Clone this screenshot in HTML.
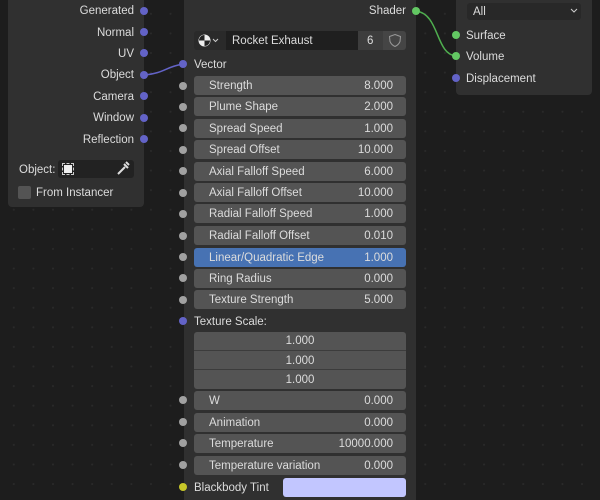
<!DOCTYPE html>
<html><head><style>
*{margin:0;padding:0;box-sizing:border-box}
html,body{width:600px;height:500px;overflow:hidden}
body{position:relative;background-color:#1d1d1d;
background-image:radial-gradient(circle,#2a2a2a 0.8px,transparent 1.2px);background-size:19.6px 19.6px;background-position:4px 4px;
font-family:"Liberation Sans","DejaVu Sans",sans-serif;font-size:11.5px;color:#dcdcdc}
.node{position:absolute;background:#303030;border-radius:4px}
.sock{position:absolute;width:8px;height:8px;border-radius:50%;margin:-4px 0 0 -4px}
.p{background:#6363c7}.g{background:#a1a1a1}.gr{background:#63c763}.y{background:#c7c729}
.t{position:absolute;white-space:nowrap;line-height:13px;margin-top:1px}
.f{position:absolute;left:194px;width:212px;height:19px;background:#545454;border-radius:3px}
.f span{position:absolute;top:4px;line-height:13px}
.f .l{left:15px}.f .v{right:13px}
.hl{background:#4772b3}
</style></head><body>
<svg style="position:absolute;left:0;top:0" width="600" height="500">
<path d="M144 75 C165 73 165 67 183 64" stroke="#6363c7" stroke-width="1.5" fill="none"/>
<path d="M416 11 C440 14 435 54 456 56" stroke="#4fae4f" stroke-width="1.5" fill="none"/>
</svg>
<div class="node" style="left:8px;top:-10px;width:136px;height:217px"></div>
<div class="t" style="right:466px;top:4px">Generated</div>
<div class="t" style="right:466px;top:26px">Normal</div>
<div class="t" style="right:466px;top:47px">UV</div>
<div class="t" style="right:466px;top:68px">Object</div>
<div class="t" style="right:466px;top:90px">Camera</div>
<div class="t" style="right:466px;top:111px">Window</div>
<div class="t" style="right:466px;top:133px">Reflection</div>
<div class="sock p" style="left:144px;top:11px"></div>
<div class="sock p" style="left:144px;top:32px"></div>
<div class="sock p" style="left:144px;top:53px"></div>
<div class="sock p" style="left:144px;top:75px"></div>
<div class="sock p" style="left:144px;top:96px"></div>
<div class="sock p" style="left:144px;top:118px"></div>
<div class="sock p" style="left:144px;top:139px"></div>
<div class="t" style="left:19px;top:163px">Object:</div>
<div style="position:absolute;left:58px;top:160px;width:76px;height:18px;background:#222;border-radius:3px"></div>
<div style="position:absolute;left:62px;top:163px;width:12px;height:12px;border:1px dashed #ccc"></div>
<div style="position:absolute;left:64px;top:165px;width:8px;height:8px;background:#eee"></div>
<svg style="position:absolute;left:116px;top:161px" width="14" height="15"><path d="M2 13 L9 6 M8 3 L12 7 M10 1 L13 4" stroke="#ddd" stroke-width="2" fill="none"/></svg>
<div style="position:absolute;left:18px;top:186px;width:13px;height:13px;background:#545454;border-radius:2px"></div>
<div class="t" style="left:36px;top:186px">From Instancer</div>
<div class="node" style="left:456px;top:-10px;width:136px;height:105px"></div>
<div style="position:absolute;left:467px;top:3px;width:114px;height:17px;background:#282828;border-radius:3px"></div>
<div class="t" style="left:473px;top:5px">All</div>
<svg style="position:absolute;left:570px;top:8px" width="8" height="6"><path d="M1 1 L4 4 L7 1" stroke="#ccc" fill="none"/></svg>
<div class="sock gr" style="left:456px;top:35px"></div>
<div class="sock gr" style="left:456px;top:56px"></div>
<div class="sock p" style="left:456px;top:78px"></div>
<div class="t" style="left:466px;top:29px">Surface</div>
<div class="t" style="left:466px;top:50px">Volume</div>
<div class="t" style="left:466px;top:72px">Displacement</div>
<div class="node" style="left:184px;top:-10px;width:232px;height:510px;border-radius:4px 4px 0 0"></div>
<div class="t" style="right:194px;top:4px">Shader</div>
<div class="sock gr" style="left:416px;top:11px"></div>
<div style="position:absolute;left:194px;top:31px;width:32px;height:19px;background:#2a2a2a;border-radius:3px 0 0 3px"></div>
<svg style="position:absolute;left:198px;top:34px" width="24" height="13"><circle cx="6.5" cy="6.5" r="5.5" fill="#eee" stroke="#eee"/><path d="M6.5 1 A5.5 5.5 0 0 0 1 6.5 L6.5 6.5Z M6.5 6.5 L12 6.5 A5.5 5.5 0 0 1 6.5 12Z" fill="#222"/><path d="M15 5 L17.5 7.5 L20 5" stroke="#ccc" fill="none"/></svg>
<div style="position:absolute;left:226px;top:31px;width:132px;height:19px;background:#1f1f1f"></div>
<div class="t" style="left:232px;top:34px">Rocket Exhaust</div>
<div style="position:absolute;left:358px;top:31px;width:25px;height:19px;background:#3d3d3d"></div>
<div class="t" style="left:367px;top:34px">6</div>
<div style="position:absolute;left:383px;top:31px;width:23px;height:19px;background:#454545;border-radius:0 3px 3px 0"></div>
<svg style="position:absolute;left:388px;top:33px" width="14" height="15"><path d="M7 1.5 L12.5 3.5 L12 8.5 Q10.5 12 7 13.5 Q3.5 12 2 8.5 L1.5 3.5Z" stroke="#999" fill="none"/></svg>
<div class="sock p" style="left:183px;top:64px"></div>
<div class="t" style="left:194px;top:58px">Vector</div>

<div class="sock g" style="left:183px;top:86px"></div><div class="f" style="top:76px"><span class="l">Strength</span><span class="v">8.000</span></div>
<div class="sock g" style="left:183px;top:107px"></div><div class="f" style="top:97px"><span class="l">Plume Shape</span><span class="v">2.000</span></div>
<div class="sock g" style="left:183px;top:128px"></div><div class="f" style="top:119px"><span class="l">Spread Speed</span><span class="v">1.000</span></div>
<div class="sock g" style="left:183px;top:150px"></div><div class="f" style="top:140px"><span class="l">Spread Offset</span><span class="v">10.000</span></div>
<div class="sock g" style="left:183px;top:171px"></div><div class="f" style="top:162px"><span class="l">Axial Falloff Speed</span><span class="v">6.000</span></div>
<div class="sock g" style="left:183px;top:193px"></div><div class="f" style="top:183px"><span class="l">Axial Falloff Offset</span><span class="v">10.000</span></div>
<div class="sock g" style="left:183px;top:214px"></div><div class="f" style="top:204px"><span class="l">Radial Falloff Speed</span><span class="v">1.000</span></div>
<div class="sock g" style="left:183px;top:236px"></div><div class="f" style="top:226px"><span class="l">Radial Falloff Offset</span><span class="v">0.010</span></div>
<div class="sock g" style="left:183px;top:257px"></div><div class="f hl" style="top:248px"><span class="l">Linear/Quadratic Edge</span><span class="v">1.000</span></div>
<div class="sock g" style="left:183px;top:278px"></div><div class="f" style="top:269px"><span class="l">Ring Radius</span><span class="v">0.000</span></div>
<div class="sock g" style="left:183px;top:300px"></div><div class="f" style="top:290px"><span class="l">Texture Strength</span><span class="v">5.000</span></div>
<div class="sock p" style="left:183px;top:321px"></div><div class="t" style="left:194px;top:315px">Texture Scale:</div>
<div class="f" style="top:332px;height:57px;background:#545454"></div>
<div style="position:absolute;left:194px;top:350px;width:212px;height:1px;background:#3c3c3c"></div>
<div style="position:absolute;left:194px;top:369px;width:212px;height:1px;background:#3c3c3c"></div>
<div class="t" style="left:194px;width:212px;text-align:center;top:334px">1.000</div>
<div class="t" style="left:194px;width:212px;text-align:center;top:354px">1.000</div>
<div class="t" style="left:194px;width:212px;text-align:center;top:373px">1.000</div>
<div class="sock g" style="left:183px;top:400px"></div><div class="f" style="top:391px"><span class="l">W</span><span class="v">0.000</span></div>
<div class="sock g" style="left:183px;top:422px"></div><div class="f" style="top:413px"><span class="l">Animation</span><span class="v">0.000</span></div>
<div class="sock g" style="left:183px;top:443px"></div><div class="f" style="top:434px"><span class="l">Temperature</span><span class="v">10000.000</span></div>
<div class="sock g" style="left:183px;top:465px"></div><div class="f" style="top:456px"><span class="l">Temperature variation</span><span class="v">0.000</span></div>
<div class="sock y" style="left:183px;top:487px"></div><div class="t" style="left:194px;top:481px">Blackbody Tint</div>
<div style="position:absolute;left:283px;top:478px;width:123px;height:19px;background:#c2c6ff;border-radius:3px"></div>
</body></html>
